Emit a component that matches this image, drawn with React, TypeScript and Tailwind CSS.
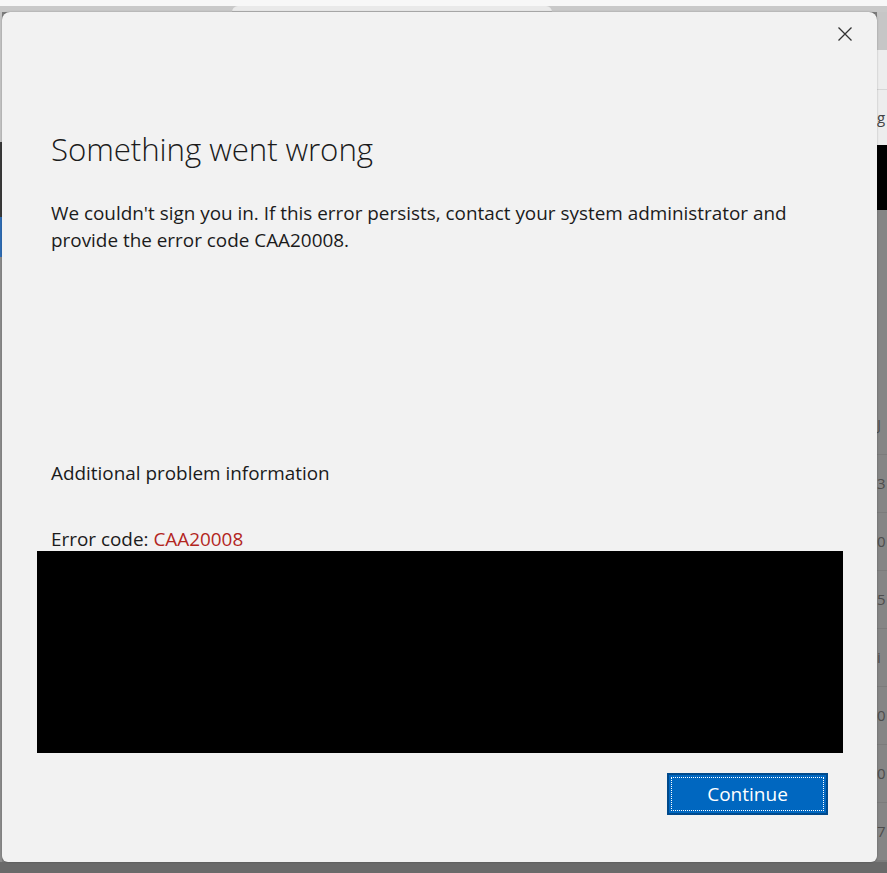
import React from 'react';

const sideDigits = ['3', '0', '5', 'i', '0', '0', '7'];

const CloseIcon = () => (
  <svg width="16" height="16" viewBox="0 0 16 16" fill="none">
    <path d="M1.5 1.5 L14.5 14.5 M14.5 1.5 L1.5 14.5" stroke="#333" strokeWidth="1.3" />
  </svg>
);

export default function App() {
  return (
    <div
      className="w-[887px] h-[873px] flex flex-col overflow-hidden bg-[#7c7c7c]"
      style={{ fontFamily: '"Open Sans", "Noto Sans", sans-serif' }}
    >
      {/* top strip of the window behind */}
      <div className="h-[12px] flex flex-col shrink-0">
        <div className="h-[6px] bg-[#f7f7f7]" />
        <div className="h-[6px] flex bg-[#c9c9c9]">
          <div className="w-[232px]" />
          <div className="w-[320px] bg-[#e9e9e9] rounded-t-[6px] border-b border-[#b5b5b5]" />
        </div>
      </div>

      <div className="flex h-[850px] shrink-0">
        {/* left strip */}
        <div className="w-[2px] flex flex-col bg-[#9a9a9a]">
          <div className="h-[130px] bg-[#c4c4c4]" />
          <div className="h-[75px] bg-[#3a3a3a]" />
          <div className="h-[40px] bg-[#2f6db5]" />
          <div className="flex-1 bg-[#8c8c8c]" />
        </div>

        {/* dialog */}
        <div className="w-[875px] bg-[#f2f2f2] rounded-t-[8px] rounded-b-[6px] flex flex-col relative shadow-[0_0_2px_rgba(0,0,0,0.3)]">
          <button className="absolute right-[24px] top-[14px] w-[16px] h-[16px] flex items-center justify-center">
            <CloseIcon />
          </button>

          <div className="pl-[49px] pt-[117px] text-[#1b1b1b]">
            <h1 className="text-[31.3px] font-light leading-[40px] tracking-[-0.1px]">Something went wrong</h1>
            <p className="mt-[31px] text-[18.9px] leading-[27px] w-[745px]">
              We couldn't sign you in. If this error persists, contact your system administrator and provide the error code CAA20008.
            </p>
            <p className="mt-[206px] text-[18.9px] leading-[27px]">Additional problem information</p>
            <p className="mt-[40px] text-[18.9px] leading-[24px]">
              Error code: <span className="text-[#b3261e]">CAA20008</span>
            </p>
          </div>

          <div className="ml-[35px] w-[806px] h-[202px] bg-black" />

          <div className="flex justify-end pr-[49px] pt-[20px]">
            <button className="w-[161px] h-[42px] bg-[#0067c0] border-2 border-[#004a8c] p-[2px]">
              <div className="w-full h-full border border-dotted border-white flex items-center justify-center text-white text-[19px] leading-none">
                Continue
              </div>
            </button>
          </div>
        </div>

        {/* right strip, window behind */}
        <div className="w-[10px] flex flex-col text-[15px] leading-none text-[#555] overflow-hidden">
          <div className="h-[38px] bg-[#c6c6c6]" />
          <div className="h-[40px] bg-[#ededed] border-b border-[#d6d6d6]" />
          <div className="h-[55px] bg-[#ededed] flex items-center text-[#444]">g</div>
          <div className="h-[65px] bg-black" />
          <div className="h-[185px] bg-[#858585]" />
          <div className="flex flex-col bg-[#858585] text-[#4d4d4d]">
            <div className="h-[59px] flex items-center">J</div>
            {sideDigits.map((d, i) => (
              <div key={i} className="h-[58px] flex items-center border-t border-[#7b7b7b]">
                {d}
              </div>
            ))}
          </div>
        </div>
      </div>

      <div className="flex-1 bg-[#6a6a6a]" />
    </div>
  );
}
